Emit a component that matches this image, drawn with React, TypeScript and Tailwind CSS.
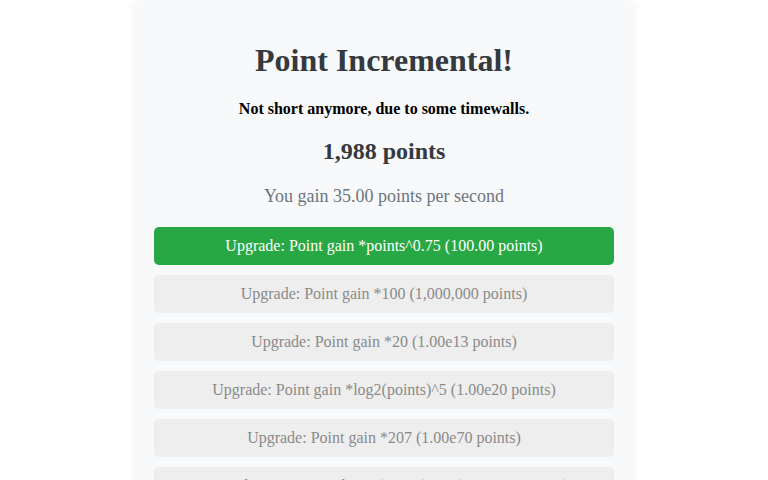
import React from "react";

const upgrades = [
  { label: "Upgrade: Point gain *points^0.75 (100.00 points)", affordable: true },
  { label: "Upgrade: Point gain *100 (1,000,000 points)", affordable: false },
  { label: "Upgrade: Point gain *20 (1.00e13 points)", affordable: false },
  { label: "Upgrade: Point gain *log2(points)^5 (1.00e20 points)", affordable: false },
  { label: "Upgrade: Point gain *207 (1.00e70 points)", affordable: false },
  { label: "Upgrade: Point gain *log10(points)^10 (1.00e100 points)", affordable: false },
];

export default function App() {
  return (
    <div className="min-h-[480px] bg-white font-['Liberation_Serif',serif]">
      <div className="mx-auto w-[500px] rounded-lg bg-[#f8f9fa] px-5 pt-5 pb-5 text-center shadow-[0_0_10px_rgba(0,0,0,0.06)]">
        <h1 className="mt-[22px] text-[32px] leading-[36px] font-bold text-[#343a40]">
          Point Incremental!
        </h1>
        <p className="mt-[21px] text-base leading-5 font-bold text-black">
          Not short anymore, due to some timewalls.
        </p>
        <h2 className="mt-[18px] text-2xl leading-7 font-bold text-[#343a40]">
          1,988 points
        </h2>
        <p className="mt-5 text-lg leading-[22px] text-[#6c757d]">
          You gain 35.00 points per second
        </p>

        {/* Upgrades */}
        <div className="mt-5 flex flex-col gap-[10px]">
          {upgrades.map((u, i) => (
            <button
              key={i}
              className={
                u.affordable
                  ? "h-[38px] w-full rounded-[5px] bg-[#28a745] text-base text-white"
                  : "h-[38px] w-full rounded-[5px] bg-[#eeeeee] text-base text-[#8a8a8a]"
              }
            >
              {u.label}
            </button>
          ))}
        </div>
      </div>
    </div>
  );
}
